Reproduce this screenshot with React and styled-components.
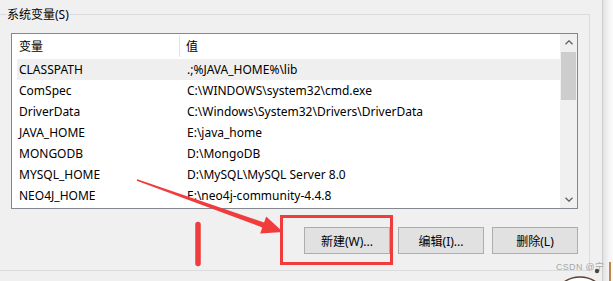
import React from "react";
import styled, { createGlobalStyle } from "styled-components";

const Global = createGlobalStyle`
  html, body { margin: 0; padding: 0; background: #f0f0f0; }
  body { font-family: "Noto Sans", "Noto Sans CJK SC", sans-serif; font-size: 12px; color: #000; }
`;

const Page = styled.div`
  position: relative;
  display: flex;
  width: 613px;
  height: 281px;
  overflow: hidden;
`;

const Window = styled.div`
  flex: none;
  width: 603px;
  height: 100%;
  box-sizing: border-box;
  background: #f0f0f0;
  border-right: 1px solid #cdcdcd;
`;

const Shadow = styled.div`
  flex: 1;
  background: linear-gradient(to right, #e2e2e2, #f4f4f4 60%, #fbfbfb);
`;

const GroupBox = styled.div`
  position: relative;
  box-sizing: border-box;
  margin: 14px 0 0 -1px;
  width: 591px;
  height: 257px;
  border: 1px solid #dcdcdc;
  padding: 18px 0 0 11px;
`;

const GroupTitle = styled.div`
  position: absolute;
  top: -8px;
  left: 7px;
  padding: 0 1px 0 0;
  line-height: 16px;
  background: #f0f0f0;
  font-family: "Noto Sans", "Noto Sans CJK SC", sans-serif;
`;

const ListView = styled.div`
  box-sizing: border-box;
  width: 567px;
  height: 176px;
  border: 1px solid #828790;
  background: #fff;
  display: flex;
  overflow: hidden;
`;

const ListBody = styled.div`
  flex: 1;
  display: flex;
  flex-direction: column;
  overflow: hidden;
`;

const Header = styled.div`
  display: flex;
  height: 25px;
  flex: none;
  align-items: stretch;
`;

const HeaderCell = styled.div`
  display: flex;
  align-items: center;
  box-sizing: border-box;
  width: ${(p) => (p.$w ? `${p.$w}px` : "auto")};
  flex: ${(p) => (p.$w ? "none" : "1")};
  padding-left: ${(p) => p.$pad}px;
  border-right: ${(p) => (p.$divider ? "1px solid #e5e5e5" : "none")};
  margin-top: 1px;
  margin-bottom: 2px;
`;

const Row = styled.div`
  display: flex;
  height: 21px;
  flex: none;
  align-items: center;
  margin-left: 5px;
  background: ${(p) => (p.$selected ? "#efefef" : "transparent")};
`;

const Cell = styled.div`
  box-sizing: border-box;
  width: ${(p) => (p.$w ? `${p.$w}px` : "auto")};
  flex: ${(p) => (p.$w ? "none" : "1")};
  padding-left: 2px;
  white-space: nowrap;
  line-height: 21px;
`;

const ScrollBar = styled.div`
  flex: none;
  width: 17px;
  background: #f0f0f0;
  display: flex;
  flex-direction: column;
`;

const ArrowBtn = styled.div`
  flex: none;
  height: 17px;
  display: flex;
  align-items: center;
  justify-content: center;
`;

const Track = styled.div`
  flex: 1;
  padding: 1px 1px 0 1px;
`;

const Thumb = styled.div`
  height: 48px;
  background: #cdcdcd;
`;

const ButtonRow = styled.div`
  display: flex;
  justify-content: flex-end;
  gap: 8px;
  width: 567px;
  margin-top: 18px;
`;

const Button = styled.div`
  box-sizing: border-box;
  width: 86px;
  height: 27px;
  border: 1px solid #adadad;
  background: #e1e1e1;
  display: flex;
  align-items: center;
  justify-content: center;
  font-family: "Noto Sans", "Noto Sans CJK SC", sans-serif;
  font-size: 12px;
`;

const Overlay = styled.svg`
  position: absolute;
  left: 0;
  top: 0;
  pointer-events: none;
`;

const Watermark = styled.div`
  position: absolute;
  left: 556px;
  top: 260px;
  font-family: "Liberation Sans", "Noto Sans CJK SC", sans-serif;
  font-size: 9px;
  color: #a8a8a8;
  letter-spacing: 0.3px;
  white-space: nowrap;
`;

const rows = [
  ["CLASSPATH", ".;%JAVA_HOME%\\lib"],
  ["ComSpec", "C:\\WINDOWS\\system32\\cmd.exe"],
  ["DriverData", "C:\\Windows\\System32\\Drivers\\DriverData"],
  ["JAVA_HOME", "E:\\java_home"],
  ["MONGODB", "D:\\MongoDB"],
  ["MYSQL_HOME", "D:\\MySQL\\MySQL Server 8.0"],
  ["NEO4J_HOME", "E:\\neo4j-community-4.4.8"],
];

const Chevron = ({ down }) => (
  <svg width="8" height="5" viewBox="0 0 8 5">
    <path
      d={down ? "M0.5 0.8 L4 4.2 L7.5 0.8" : "M0.5 4.2 L4 0.8 L7.5 4.2"}
      fill="none"
      stroke="#606060"
      strokeWidth="1.3"
    />
  </svg>
);

function arrowShape() {
  const sx = 137, sy = 180, tx = 283, ty = 232;
  const dx = tx - sx, dy = ty - sy;
  const len = Math.hypot(dx, dy);
  const ux = dx / len, uy = dy / len;
  const px = -uy, py = ux;
  const headLen = 21, headHalf = 9;
  const bx = tx - ux * headLen, by = ty - uy * headLen;
  const w0 = 0.9, w1 = 2.6;
  const pts = [
    [sx + px * w0, sy + py * w0],
    [bx + px * w1, by + py * w1],
    [bx + px * headHalf, by + py * headHalf],
    [tx, ty],
    [bx - px * headHalf, by - py * headHalf],
    [bx - px * w1, by - py * w1],
    [sx - px * w0, sy - py * w0],
  ];
  return pts.map((p) => p.map((v) => v.toFixed(1)).join(",")).join(" ");
}

export default function App() {
  return (
    <>
      <Global />
      <Page>
        <Window>
          <GroupBox>
            <GroupTitle>系统变量(S)</GroupTitle>
            <ListView>
              <ListBody>
                <Header>
                  <HeaderCell $w={168} $pad={7} $divider>变量</HeaderCell>
                  <HeaderCell $pad={6}>值</HeaderCell>
                </Header>
                {rows.map(([k, v], i) => (
                  <Row key={k} $selected={i === 0}>
                    <Cell $w={168}>{k}</Cell>
                    <Cell>{v}</Cell>
                  </Row>
                ))}
              </ListBody>
              <ScrollBar>
                <ArrowBtn><Chevron /></ArrowBtn>
                <Track><Thumb /></Track>
                <ArrowBtn><Chevron down /></ArrowBtn>
              </ScrollBar>
            </ListView>
            <ButtonRow>
              <Button>新建(W)...</Button>
              <Button>编辑(I)...</Button>
              <Button>删除(L)</Button>
            </ButtonRow>
          </GroupBox>
        </Window>
        <Shadow />
        <Watermark>CSDN @宁</Watermark>
        <Overlay width="613" height="281" viewBox="0 0 613 281">
          <polygon points={arrowShape()} fill="#f03c3c" />
          <line x1="198" y1="224.5" x2="198" y2="263.5" stroke="#f03c3c" strokeWidth="5.5" strokeLinecap="round" />
          <rect x="281.5" y="216.5" width="110" height="47" fill="none" stroke="#f03c3c" strokeWidth="3" />
          <circle cx="580" cy="305" r="28" fill="#fff" stroke="#5a4332" strokeWidth="1.5" />
          <circle cx="597" cy="271" r="2.2" fill="#5a4332" />
          <rect x="609" y="262" width="2" height="19" fill="#b88a50" />
        </Overlay>
      </Page>
    </>
  );
}
